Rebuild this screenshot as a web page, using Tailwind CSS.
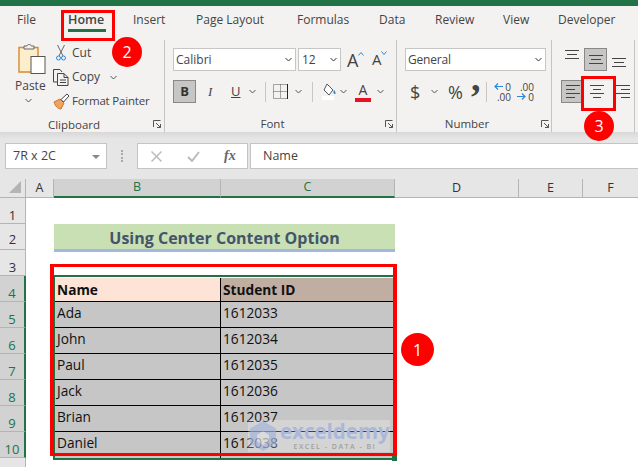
<!DOCTYPE html>
<html lang="en">
  <head>
    <meta charset="UTF-8" />
    <title>Excel - Center Content</title>
    <script src="https://cdn.jsdelivr.net/npm/@tailwindcss/browser@4"></script>
  </head>
  <body class="bg-white font-['Open_Sans',sans-serif] text-[#444]">
    <div class="relative w-[638px] h-[467px] overflow-hidden">
      <!-- Title bar -->
      <div class="h-[6px] bg-[#217346]"></div>

      <!-- Tabs -->
      <nav class="h-[30px] bg-[#f3f2f1] flex items-center text-[12px] leading-none pb-[2px]">
        <span class="ml-[17px] w-[18px]">File</span>
        <span class="ml-[33px] w-[38px] font-semibold text-[12.5px] relative">Home<span class="absolute left-0 right-0 top-[15px] h-[3px] bg-[#217346]"></span></span>
        <span class="ml-[27px] w-[32px]">Insert</span>
        <span class="ml-[31px] w-[71px] whitespace-nowrap">Page Layout</span>
        <span class="ml-[30px] w-[53px]">Formulas</span>
        <span class="ml-[29px] w-[27px]">Data</span>
        <span class="ml-[29px] w-[40px]">Review</span>
        <span class="ml-[28px] w-[27px]">View</span>
        <span class="ml-[28px] w-[59px]">Developer</span>
      </nav>

      <!-- Ribbon -->
      <div class="h-[96px] bg-[#f3f2f1] flex text-[12px] leading-none">
        <!-- Clipboard -->
        <section class="w-[165px] h-[92px] mt-[4px] border-r border-[#c4c4c4] flex flex-col shrink-0">
          <div class="flex flex-1">
            <div class="w-[52px] pl-[15px] flex flex-col items-start">
              <svg class="mt-[3px] ml-[3px]" width="28" height="31" viewBox="0 0 28 31" fill="none">
                <path d="M1 4.5h19V22H14v7H1z" fill="#fdeecb" stroke="#d88a2e" stroke-width="1.4" />
                <path d="M6 5V3h3c.3-2 4-2 4.300 0H16v3H6z" fill="#f3f2f1" stroke="#666" />
                <rect x="13" y="13.500" width="14" height="17" fill="#fff" stroke="#555" />
              </svg>
              <span class="mt-[6px] text-[12px]">Paste</span>
              <svg class="mt-[6px] ml-[10px]" width="7" height="5" viewBox="0 0 7 5" fill="none"><path d="M.5 1l3 3 3-3" stroke="#555" /></svg>
            </div>
            <div class="flex flex-col pt-[1px]">
              <div class="h-[24px] flex items-center">
                <svg class="ml-[4px] mr-[6px]" width="10" height="16" viewBox="0 0 10 16" fill="none">
                  <path d="M1.500 0l5.500 11M8.500 0L3 11" stroke="#666" />
                  <circle cx="2.500" cy="13" r="2" stroke="#2b88d8" />
                  <circle cx="7.500" cy="13" r="2" stroke="#2b88d8" />
                </svg>
                <span>Cut</span>
              </div>
              <div class="h-[24px] flex items-center">
                <svg class="ml-[1px] mr-[3px]" width="16" height="17" viewBox="0 0 16 17" fill="none">
                  <path d="M4 13H.5V.5H7L9 3" stroke="#444" />
                  <path d="M4.500 4.500H11l4 4v8H4.500zM11 4.500v4h4M7 11h6M7 13.500h6" stroke="#444" />
                </svg>
                <span>Copy</span>
                <svg class="ml-[10px]" width="7" height="5" viewBox="0 0 7 5" fill="none"><path d="M.5 1l3 3 3-3" stroke="#555" /></svg>
              </div>
              <div class="h-[24px] flex items-center">
                <svg class="ml-[1px] mr-[2px]" width="17" height="17" viewBox="0 0 17 17" fill="none">
                  <path d="M1 9l6-3 4 4-3 6c-3 0-6-3-7-7z" fill="#f0a35e" stroke="#c8742a" />
                  <path d="M8 6.500l6-5.500 2 2-5.500 6z" fill="#fff" stroke="#444" />
                </svg>
                <span class="whitespace-nowrap text-[11.5px] tracking-[-0.2px]">Format Painter</span>
              </div>
            </div>
          </div>
          <div class="h-[16px] relative text-center pr-[16px] pt-[3px] text-[11.5px]">
            Clipboard
            <svg class="absolute left-[153px] top-[4px]" width="8" height="8" viewBox="0 0 8 8" fill="none"><path d="M.5 7V.5H7.500M3 3l4.500 4.500M4 7.500h3.500V4" stroke="#555" /></svg>
          </div>
        </section>

        <!-- Font -->
        <section class="w-[232px] h-[92px] mt-[4px] border-r border-[#c4c4c4] flex flex-col shrink-0 pl-[8px]">
          <div class="flex items-center h-[23px] mt-[8px]">
            <div class="w-[123px] h-[23px] bg-white border border-[#c8c6c4] flex items-center justify-between pl-[2px] pr-[3px]">
              <span>Calibri</span>
              <svg width="7" height="5" viewBox="0 0 7 5" fill="none"><path d="M.5 1l3 3 3-3" stroke="#333" /></svg>
            </div>
            <div class="ml-[2px] w-[43px] h-[23px] bg-white border border-[#c8c6c4] flex items-center justify-between pl-[3px] pr-[3px]">
              <span>12</span>
              <svg width="7" height="5" viewBox="0 0 7 5" fill="none"><path d="M.5 1l3 3 3-3" stroke="#333" /></svg>
            </div>
            <span class="ml-[6px] text-[18px] relative w-[16px]">A<svg class="absolute left-[11px] top-[1px]" width="6" height="4" viewBox="0 0 6 4" fill="none"><path d="M.5 3.500l2.500-3 2.500 3" stroke="#2b88d8" /></svg></span>
            <span class="ml-[9px] text-[15px] relative w-[14px]">A<svg class="absolute left-[9px] top-[-1px]" width="6" height="4" viewBox="0 0 6 4" fill="none"><path d="M.5.500l2.500 3 2.500-3" stroke="#2b88d8" /></svg></span>
          </div>
          <div class="flex items-center h-[23px] mt-[9px]">
            <span class="w-[23px] h-[23px] bg-[#c8c6c4] border border-[#8a8886] flex items-center justify-center font-bold text-[13px] text-[#333]">B</span>
            <span class="ml-[12px] w-[8px] italic text-[13px] font-['Liberation_Serif',serif]">I</span>
            <span class="ml-[15px] w-[10px] underline text-[13px]">U</span>
            <svg class="ml-[8px]" width="7" height="5" viewBox="0 0 7 5" fill="none"><path d="M.5 1l3 3 3-3" stroke="#555" /></svg>
            <span class="ml-[9px] w-px h-[20px] bg-[#c8c6c4]"></span>
            <svg class="ml-[7px]" width="15" height="15" viewBox="0 0 15 15" fill="none">
              <path d="M.5.500h14v14H.5zM7.500.500v14M.5 7.500h14" stroke="#555" stroke-dasharray="1 1" />
              <path d="M14.500 0v15" stroke="#222" />
            </svg>
            <svg class="ml-[7px]" width="7" height="5" viewBox="0 0 7 5" fill="none"><path d="M.5 1l3 3 3-3" stroke="#555" /></svg>
            <span class="ml-[10px] w-px h-[20px] bg-[#c8c6c4]"></span>
            <svg class="ml-[9px]" width="15" height="17" viewBox="0 0 15 17" fill="none">
              <path d="M5 1l6 6-4 5-5-5z" fill="#fff" stroke="#555" />
              <path d="M12 7c2 2 2 4 .7 4S11 9 12 7z" fill="#2b88d8" />
              <rect x="0" y="13" width="12" height="4" fill="#fff" />
            </svg>
            <svg class="ml-[3px]" width="7" height="5" viewBox="0 0 7 5" fill="none"><path d="M.5 1l3 3 3-3" stroke="#555" /></svg>
            <span class="ml-[8px] w-[16px] h-[20px] flex flex-col items-center border-b-[4px] border-[#e81123] text-[14px] leading-[15px]">A</span>
            <svg class="ml-[6px]" width="7" height="5" viewBox="0 0 7 5" fill="none"><path d="M.5 1l3 3 3-3" stroke="#555" /></svg>
          </div>
          <div class="flex-1 relative text-center pr-[24px] pt-[15px] text-[11.5px]">
            Font
            <svg class="absolute left-[212px] top-[17px]" width="8" height="8" viewBox="0 0 8 8" fill="none"><path d="M.5 7V.5H7.500M3 3l4.500 4.500M4 7.500h3.500V4" stroke="#555" /></svg>
          </div>
        </section>

        <!-- Number -->
        <section class="w-[155px] h-[92px] mt-[4px] border-r border-[#c4c4c4] flex flex-col shrink-0 pl-[8px]">
          <div class="mt-[8px] w-[141px] h-[23px] bg-white border border-[#c8c6c4] flex items-center justify-between pl-[2px] pr-[3px]">
            <span class="tracking-[-0.2px]">General</span>
            <svg width="7" height="5" viewBox="0 0 7 5" fill="none"><path d="M.5 1l3 3 3-3" stroke="#333" /></svg>
          </div>
          <div class="flex items-center h-[23px] mt-[9px]">
            <span class="ml-[5px] w-[12px] text-[18px]">$</span>
            <svg class="ml-[9px]" width="7" height="5" viewBox="0 0 7 5" fill="none"><path d="M.5 1l3 3 3-3" stroke="#555" /></svg>
            <span class="ml-[10px] w-[16px] text-[18px] whitespace-nowrap">%</span>
            <span class="ml-[7px] w-[12px] h-[20px] text-[38px] font-bold leading-[20px] font-['Liberation_Serif',serif] -translate-y-[14px]">,</span>
            <span class="ml-[3px] w-px h-[20px] bg-[#c8c6c4]"></span>
            <span class="ml-[7px] w-[17px] flex flex-col items-end text-[10px] leading-[10px]">
              <span class="flex items-center"><svg class="mr-[2px]" width="9" height="7" viewBox="0 0 9 7" fill="none"><path d="M9 3.500H1M4 .5l-3 3 3 3" stroke="#2b88d8" stroke-width="1.200" /></svg>0</span>
              <span>.00</span>
            </span>
            <span class="ml-[6px] w-[17px] flex flex-col items-end text-[10px] leading-[10px]">
              <span>.00</span>
              <span class="flex items-center"><svg class="mr-[2px]" width="9" height="7" viewBox="0 0 9 7" fill="none"><path d="M0 3.500h8M5 .5l3 3-3 3" stroke="#2b88d8" stroke-width="1.200" /></svg>0</span>
            </span>
          </div>
          <div class="flex-1 relative text-center pr-[22px] pt-[15px] text-[11.5px]">
            Number
            <svg class="absolute left-[136px] top-[17px]" width="8" height="8" viewBox="0 0 8 8" fill="none"><path d="M.5 7V.5H7.500M3 3l4.500 4.500M4 7.500h3.500V4" stroke="#555" /></svg>
          </div>
        </section>

        <!-- Alignment -->
        <section class="w-[83px] h-[92px] mt-[4px] border-r border-[#c4c4c4] flex flex-col shrink-0">
          <div class="flex items-start h-[23px] mt-[8px]">
            <svg class="ml-[13px] mt-[2px]" width="14" height="10" viewBox="0 0 14 10" fill="none"><path d="M0 .5h14M2 4.500h10M0 8.500h14" stroke="#444" /></svg>
            <span class="ml-[5px] w-[23px] h-[23px] bg-[#c8c6c4] border border-[#8a8886] flex items-center justify-center">
              <svg width="14" height="10" viewBox="0 0 14 10" fill="none"><path d="M0 .5h14M2 4.500h10M0 8.500h14" stroke="#444" /></svg>
            </span>
            <svg class="ml-[5px] mt-[10px]" width="14" height="10" viewBox="0 0 14 10" fill="none"><path d="M0 .5h14M2 4.500h10M0 8.500h14" stroke="#444" /></svg>
          </div>
          <div class="flex items-center h-[23px] mt-[9px]">
            <span class="ml-[9px] w-[23px] h-[23px] bg-[#c8c6c4] border border-[#8a8886] flex items-center justify-center">
              <svg width="14" height="14" viewBox="0 0 14 14" fill="none"><path d="M0 .5h14M0 4.500h9M0 8.500h14M0 12.500h9" stroke="#444" /></svg>
            </span>
            <svg class="ml-[6px]" width="14" height="14" viewBox="0 0 14 14" fill="none"><path d="M0 .5h14M3 4.500h8M0 8.500h14M3 12.500h8" stroke="#444" /></svg>
            <svg class="ml-[12px]" width="14" height="14" viewBox="0 0 14 14" fill="none"><path d="M0 .5h14M5 4.500h9M0 8.500h14M5 12.500h9" stroke="#444" /></svg>
          </div>
        </section>
      </div>

      <!-- Formula bar -->
      <div class="h-[47px] bg-gradient-to-b from-[#d8d8d8] to-[#e6e6e6] to-[15%] flex items-start pt-[11px] text-[12.5px] leading-none">
        <div class="ml-[5px] w-[102px] h-[26px] bg-white border border-[#c4c4c4] flex items-center justify-between pl-[7px] pr-[6px] pt-[1px]">
          <span>7R x 2C</span>
          <span class="w-0 h-0 border-x-[4px] border-x-transparent border-t-[4px] border-t-[#888]"></span>
        </div>
        <div class="ml-[14px] w-[2px] h-[12px] mt-[7px] border-l-2 border-dotted border-[#aaa]"></div>
        <div class="ml-[14px] w-[111px] h-[26px] bg-white border border-[#c4c4c4] flex items-center">
          <svg class="ml-[13px]" width="11" height="11" viewBox="0 0 11 11" fill="none"><path d="M.5.500l10 10M10.500.500l-10 10" stroke="#bbb" stroke-width="1.500" /></svg>
          <svg class="ml-[25px]" width="13" height="11" viewBox="0 0 13 11" fill="none"><path d="M1 6l4 4 7-9" stroke="#bbb" stroke-width="2" /></svg>
          <span class="ml-[24px] italic font-bold text-[14px] text-[#666] font-['Liberation_Serif',serif]">fx</span>
        </div>
        <div class="ml-[2px] flex-1 h-[26px] bg-white border-y border-[#c4c4c4] border-l flex items-center pl-[12px] pt-[1px]">Name</div>
      </div>

      <!-- Sheet -->
      <div class="grid grid-cols-[26px_28px_167px_174px_124px_64px_55px] grid-rows-[19px_repeat(10,26px)_9px] text-[13.7px] leading-none text-[#111]">
        <!-- Column headers -->
        <div class="bg-[#e6e6e6] border-r border-b border-[#b4b4b4] flex items-end justify-end p-[4px]"><span class="w-0 h-0 border-l-[12px] border-l-transparent border-b-[12px] border-b-[#b4b4b4]"></span></div>
        <div class="bg-[#e6e6e6] border-r border-b border-[#b4b4b4] flex items-center justify-center text-[12.5px] text-[#333]">A</div>
        <div class="bg-[#d2d2d2] border-r border-[#b4b4b4] border-b-2 border-b-[#217346] flex items-center justify-center text-[12.5px] text-[#217346]">B</div>
        <div class="bg-[#d2d2d2] border-r border-[#b4b4b4] border-b-2 border-b-[#217346] flex items-center justify-center text-[12.5px] text-[#217346]">C</div>
        <div class="bg-[#e6e6e6] border-r border-b border-[#b4b4b4] flex items-center justify-center text-[12.5px] text-[#333]">D</div>
        <div class="bg-[#e6e6e6] border-r border-b border-[#b4b4b4] flex items-center justify-center text-[12.5px] text-[#333]">E</div>
        <div class="bg-[#e6e6e6] border-b border-[#b4b4b4] flex items-center justify-center text-[12.5px] text-[#333]">F</div>

        <!-- Row 1 -->
        <div class="bg-[#e6e6e6] border-r border-b border-[#b4b4b4] flex items-end justify-center pb-[1px] text-[13px] text-[#333]">1</div>
        <div class="col-span-6"></div>

        <!-- Row 2 -->
        <div class="bg-[#e6e6e6] border-r border-b border-[#b4b4b4] flex items-end justify-center pb-[3px] text-[13px] text-[#333]">2</div>
        <div></div>
        <div class="col-span-2 h-[28px] z-[1] bg-[#c8e0b4] border-b-[3px] border-[#a3b8e0] flex items-center justify-center font-bold text-[16px] text-[#44546a] pt-[2px]">Using Center Content Option</div>
        <div class="col-span-3"></div>

        <!-- Row 3 -->
        <div class="bg-[#e6e6e6] border-r border-b border-[#b4b4b4] flex items-end justify-center pb-[1px] text-[13px] text-[#333]">3</div>
        <div class="col-span-6"></div>

        <!-- Row 4 -->
        <div class="bg-[#d2d2d2] border-r-2 border-r-[#217346] border-b border-[#b4b4b4] flex items-end justify-center pb-[1px] text-[13px] text-[#217346]">4</div>
        <div></div>
        <div class="mt-[2px] ml-[1px] bg-[#fde4d6] border-r border-b border-black flex items-center pl-[2px] font-bold">Name</div>
        <div class="mt-[2px] mr-[2px] bg-[#c0aea2] border-b border-black flex items-center pl-[2px] font-bold">Student ID</div>
        <div class="col-span-3"></div>

        <!-- Row 5 -->
        <div class="bg-[#d2d2d2] border-r-2 border-r-[#217346] border-b border-[#b4b4b4] flex items-end justify-center pb-[1px] text-[13px] text-[#217346]">5</div>
        <div></div>
        <div class="ml-[1px] bg-[#c6c6c6] border-r border-b border-black flex items-center pl-[2px] pb-[4px]">Ada</div>
        <div class="mr-[2px] bg-[#c6c6c6] border-b border-black flex items-center pl-[2px] pb-[4px]">1612033</div>
        <div class="col-span-3"></div>

        <!-- Row 6 -->
        <div class="bg-[#d2d2d2] border-r-2 border-r-[#217346] border-b border-[#b4b4b4] flex items-end justify-center pb-[1px] text-[13px] text-[#217346]">6</div>
        <div></div>
        <div class="ml-[1px] bg-[#c6c6c6] border-r border-b border-black flex items-center pl-[2px] pb-[4px]">John</div>
        <div class="mr-[2px] bg-[#c6c6c6] border-b border-black flex items-center pl-[2px] pb-[4px]">1612034</div>
        <div class="col-span-3"></div>

        <!-- Row 7 -->
        <div class="bg-[#d2d2d2] border-r-2 border-r-[#217346] border-b border-[#b4b4b4] flex items-end justify-center pb-[1px] text-[13px] text-[#217346]">7</div>
        <div></div>
        <div class="ml-[1px] bg-[#c6c6c6] border-r border-b border-black flex items-center pl-[2px] pb-[4px]">Paul</div>
        <div class="mr-[2px] bg-[#c6c6c6] border-b border-black flex items-center pl-[2px] pb-[4px]">1612035</div>
        <div class="col-span-3"></div>

        <!-- Row 8 -->
        <div class="bg-[#d2d2d2] border-r-2 border-r-[#217346] border-b border-[#b4b4b4] flex items-end justify-center pb-[1px] text-[13px] text-[#217346]">8</div>
        <div></div>
        <div class="ml-[1px] bg-[#c6c6c6] border-r border-b border-black flex items-center pl-[2px] pb-[4px]">Jack</div>
        <div class="mr-[2px] bg-[#c6c6c6] border-b border-black flex items-center pl-[2px] pb-[4px]">1612036</div>
        <div class="col-span-3"></div>

        <!-- Row 9 -->
        <div class="bg-[#d2d2d2] border-r-2 border-r-[#217346] border-b border-[#b4b4b4] flex items-end justify-center pb-[1px] text-[13px] text-[#217346]">9</div>
        <div></div>
        <div class="ml-[1px] bg-[#c6c6c6] border-r border-b border-black flex items-center pl-[2px] pb-[4px]">Brian</div>
        <div class="mr-[2px] bg-[#c6c6c6] border-b border-black flex items-center pl-[2px] pb-[4px]">1612037</div>
        <div class="col-span-3"></div>

        <!-- Row 10 -->
        <div class="bg-[#d2d2d2] border-r-2 border-r-[#217346] border-b border-[#b4b4b4] flex items-end justify-center pb-[1px] text-[13px] text-[#217346]">10</div>
        <div></div>
        <div class="ml-[1px] bg-[#c6c6c6] border-r border-black flex items-center pl-[2px] pb-[4px]">Daniel</div>
        <div class="mr-[2px] bg-[#c6c6c6] flex items-center pl-[2px] pb-[4px]">1612038</div>
        <div class="col-span-3"></div>

        <!-- Row 11 stub -->
        <div class="bg-[#e6e6e6] border-r border-[#b4b4b4]"></div>
        <div class="col-span-6"></div>
      </div>

      <!-- Selection outline -->
      <div class="absolute left-[53px] top-[275px] w-[342px] h-[185px] border-2 border-[#217346]"></div>
      <div class="absolute left-[392px] top-[456px] w-[5px] h-[5px] bg-[#217346]"></div>

      <!-- Watermark -->
      <div class="absolute left-[248px] top-[420px] w-[142px] h-[32px] bg-white/25 flex items-center">
        <svg class="ml-[2px] shrink-0 opacity-60" width="26" height="30" viewBox="0 0 26 30"><path d="M13 0l13 7.500v15L13 30 0 22.500v-15z" fill="#9db0dc" /><path d="M13 10l6 4v6l-6 4-6-4v-6z" fill="#e0e0e0" /></svg>
        <div class="ml-[4px] flex flex-col items-center">
          <span class="text-[20.5px] leading-[19px] font-bold text-[#a9b8dc]">exceldemy</span>
          <span class="text-[7px] leading-[8px] mt-[2px] font-semibold tracking-[1.5px] text-[#a0a0a0] whitespace-nowrap">EXCEL - DATA - BI</span>
        </div>
      </div>

      <!-- Annotations -->
      <div class="absolute left-[61px] top-[10px] w-[54px] h-[31px] border-[3px] border-[#ff0000]"></div>
      <div class="absolute left-[581px] top-[76px] w-[35px] h-[35px] border-[3px] border-[#ff0000]"></div>
      <div class="absolute left-[50px] top-[264px] w-[347px] h-[192px] border-[3px] border-l-4 border-r-4 border-[#ff0000]"></div>
      <div class="absolute left-[112px] top-[37px] w-[30px] h-[30px] rounded-full bg-[#ff0000] text-white text-[16px] flex items-center justify-center">2</div>
      <div class="absolute left-[584px] top-[111px] w-[30px] h-[30px] rounded-full bg-[#ff0000] text-white text-[16px] flex items-center justify-center">3</div>
      <div class="absolute left-[401px] top-[333px] w-[33px] h-[33px] rounded-full bg-[#ff0000] text-white text-[16px] flex items-center justify-center">1</div>
    </div>
  </body>
</html>
